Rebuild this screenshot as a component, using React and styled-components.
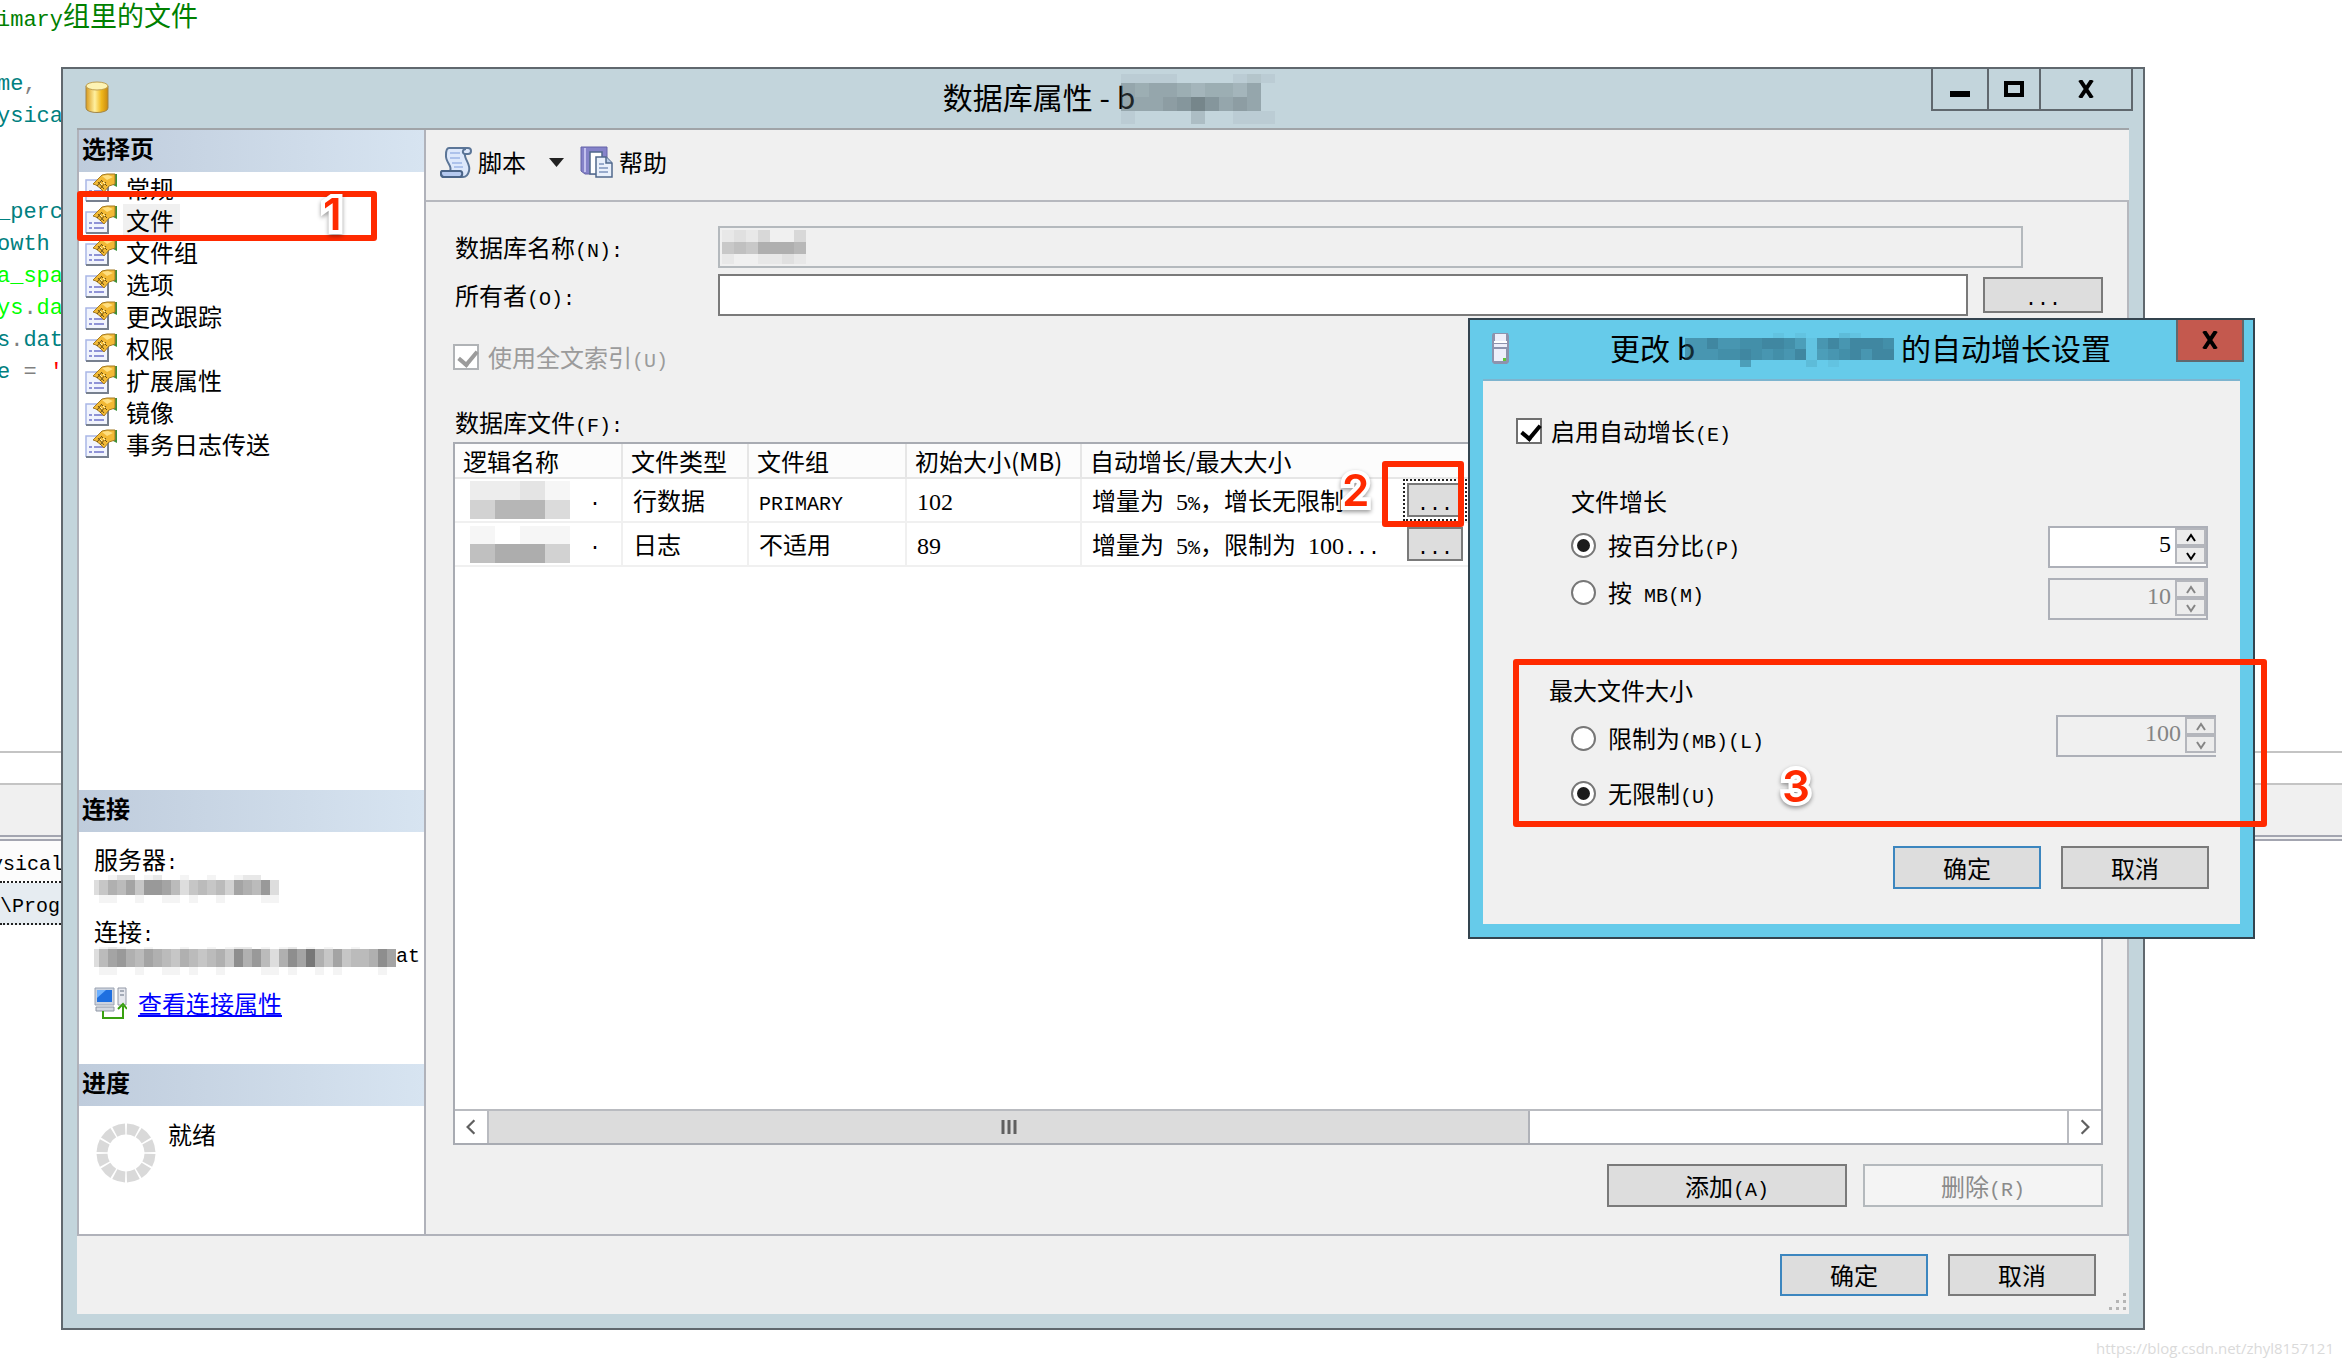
import React from "react";
import styled, { createGlobalStyle } from "styled-components";

const GlobalStyle = createGlobalStyle`
  * {
    box-sizing: border-box;
  }
  body {
    margin: 0;
    background: #fff;
    color: #000;
    font-family: "Noto Sans CJK SC", sans-serif;
    font-size: 24px;
    line-height: 32px;
  }
  button, input {
    font: inherit;
    color: inherit;
    border-radius: 0;
    margin: 0;
    padding: 0;
  }
  button {
    cursor: pointer;
  }
`;

/* ---------- text ---------- */

const Latin = styled.span`
  font-family: "Liberation Mono", monospace;
  font-size: 20px;
  line-height: 1;
`;

const Digits = styled.span`
  font-family: "Liberation Serif", serif;
  line-height: 1;
`;

// half-width characters take half of a CJK character, as on a Windows dialog
function Mixed({ children }) {
  return children
    .split(/([0-9]+|[\x20-\x2f\x3a-\x7e]+)/)
    .filter(Boolean)
    .map((part, i) => {
      if (/^[0-9]/.test(part)) return <Digits key={i}>{part}</Digits>;
      if (/^[\x20-\x7e]/.test(part)) return <Latin key={i}>{part}</Latin>;
      return part;
    });
}

/* ---------- mosaic over private names ---------- */

const MosaicSvg = styled.svg`
  display: block;
  flex: none;
  margin-left: ${(props) => props.$overlap || 0}px;
`;

// every hex digit is the strength of one cell
function Mosaic({ rows, cell, ink, overlap }) {
  const width = Math.max(...rows.map((r) => r[1].length)) * cell;
  const height = rows.reduce((sum, r) => sum + r[0], 0);
  let y = 0;
  return (
    <MosaicSvg
      width={width}
      height={height}
      shapeRendering="crispEdges"
      aria-hidden="true"
      $overlap={overlap}
    >
      {rows.map(([h, digits], r) => {
        const top = y;
        y += h;
        return digits
          .split("")
          .map((d, i) => (
            <rect
              key={r + "-" + i}
              x={i * cell}
              y={top}
              width={cell}
              height={h}
              fill={ink}
              opacity={parseInt(d, 16) / 15}
            />
          ));
      })}
    </MosaicSvg>
  );
}

/* ---------- icons ---------- */

const Icon = styled.svg`
  display: block;
  flex: none;
`;

function DatabaseIcon() {
  return (
    <Icon width="24" height="32" viewBox="0 0 24 32" aria-hidden="true">
      <defs>
        <linearGradient id="gold">
          <stop offset="0" stopColor="#d99a1c" />
          <stop offset="0.4" stopColor="#fff0a0" />
          <stop offset="0.7" stopColor="#f0b81c" />
          <stop offset="1" stopColor="#c98a10" />
        </linearGradient>
      </defs>
      <path
        d="M1 5v22c0 6 22 6 22 0V5z"
        fill="url(#gold)"
        stroke="#a0854a"
        strokeWidth="1"
      />
      <ellipse cx="12" cy="5" rx="11" ry="4" fill="#fdf3b4" stroke="#c0a050" />
    </Icon>
  );
}

function PageIcon() {
  return (
    <Icon width="32" height="30" viewBox="0 0 32 30" aria-hidden="true">
      <path d="M1 7h22v21H1z" fill="#f1f4fd" />
      <path d="M1 28V7h22" fill="none" stroke="#a9b6e6" strokeWidth="1.5" />
      <path d="M23 10v18H1" fill="none" stroke="#77808f" strokeWidth="2" />
      <path
        d="M4 18h3M4 23h3M9 18h10M9 23h10"
        stroke="#8f93d6"
        strokeWidth="2"
      />
      <path d="M28 1h4v13l-4-2z" fill="#3c8f3a" />
      <path
        d="M8 11L17 2l5-1h8v10l-6 2-5 6-4-4-4-3z"
        fill="#f2b935"
        stroke="#a37a22"
        strokeWidth="1"
      />
      <path d="M17 3l6-1 5 2-6 3z" fill="#ffdf80" />
      <path
        d="M13 9l6 7M16 7l6 6M12 13l5-6M15 16l6-7"
        stroke="#6b5012"
        strokeWidth="1"
      />
      <path d="M15 10l2 2M18 9l2 2" stroke="#fff3b0" strokeWidth="1" />
    </Icon>
  );
}

function ScriptIcon() {
  return (
    <Icon width="32" height="32" viewBox="0 0 32 32" aria-hidden="true">
      <path
        d="M9 2h19c4 0 4 6 0 6h-3c-1 5 6 10 4 17-1 4-3 6-6 6H4c-4 0-4-6 0-6h6c3-5-5-9-4-16 0-4 1-7 3-7z"
        fill="#dde8fb"
        stroke="#5b7597"
        strokeWidth="2"
      />
      <path
        d="M2 25h18c3 0 3 5 0 6H4c-3 0-4-5-2-6z"
        fill="#b5c9ef"
        stroke="#4a6488"
        strokeWidth="2"
      />
      <path d="M25 8c-3 0-3-5 1-5" fill="none" stroke="#5b7597" strokeWidth="2" />
      <path
        d="M10 7h10M10 12h10M12 17h10M14 21h9"
        stroke="#9db5e6"
        strokeWidth="1.5"
      />
    </Icon>
  );
}

function HelpIcon() {
  return (
    <Icon width="33" height="32" viewBox="0 0 33 32" aria-hidden="true">
      <path d="M1 1h26v27H5l-4-3z" fill="#8583c9" stroke="#6462a8" />
      <path d="M5 2v24" stroke="#c3c1ee" strokeWidth="2" />
      <path d="M10 6h12v22H10z" fill="#fff" stroke="#50688c" strokeWidth="1.5" />
      <path
        d="M16 11h10l6 6v14H16z"
        fill="#e9f0fb"
        stroke="#50688c"
        strokeWidth="1.5"
      />
      <path d="M26 11v6h6" fill="#b9cbe6" stroke="#50688c" strokeWidth="1.5" />
      <path d="M19 18h5M19 22h9M19 26h9" stroke="#7d94bd" strokeWidth="1.5" />
    </Icon>
  );
}

function ServerIcon() {
  return (
    <Icon width="20" height="32" viewBox="0 0 20 32" aria-hidden="true">
      <path d="M2 1h15l1 3v26l-2 2H3l-2-2V3z" fill="#8d93ad" />
      <path d="M4 2h11v7H4zM3 12h13v3H3zM3 17h12v12H3z" fill="#eeeffa" />
      <path d="M3 10h13" stroke="#fff" strokeWidth="2" />
      <path d="M12 26h3v3h-3z" fill="#5fc736" />
    </Icon>
  );
}

function LinkIcon() {
  return (
    <Icon width="33" height="32" viewBox="0 0 33 32" aria-hidden="true">
      <path d="M1 1h19v17H1z" fill="#cdd3de" stroke="#9aa3b2" />
      <path d="M3 3h15v12H3z" fill="#1f6fe0" />
      <path d="M3 3h9L3 11z" fill="#6cb0ff" />
      <path d="M2 20h18v4H2z" fill="#d5d9e0" stroke="#8e96a5" />
      <path d="M24 1h8v17h-8z" fill="#e6e8ee" stroke="#9298a6" />
      <path d="M26 4h4M26 8h4" stroke="#8e96a5" strokeWidth="1.5" />
      <path
        d="M9 24v7h20V19M24 22l5-5 4 5"
        fill="none"
        stroke="#39a010"
        strokeWidth="2"
      />
    </Icon>
  );
}

function Spinner() {
  return (
    <Icon width="60" height="60" viewBox="0 0 60 60" aria-hidden="true">
      <circle
        cx="30"
        cy="30"
        r="24"
        fill="none"
        stroke="#d9d9d9"
        strokeWidth="11"
        pathLength="120"
        strokeDasharray="8.6 1.4"
        strokeDashoffset="-0.7"
      />
    </Icon>
  );
}

function Chevron({ dir, size = 16 }) {
  const d = {
    up: "M4 11l4-6 4 6",
    down: "M4 5l4 6 4-6",
    left: "M11 2L5 8l6 6",
    right: "M5 2l6 6-6 6",
  }[dir];
  return (
    <Icon width={size} height={size} viewBox="0 0 16 16" aria-hidden="true">
      <path d={d} fill="none" stroke="currentColor" strokeWidth="2" />
    </Icon>
  );
}

function CloseGlyph() {
  return (
    <svg width="18" height="18" viewBox="0 0 18 18" aria-hidden="true">
      <path d="M3 0l12 18M15 0L3 18" stroke="#000" strokeWidth="4" />
    </svg>
  );
}

/* ---------- editor behind the windows ---------- */

const Desktop = styled.div`
  position: relative;
  display: flex;
  flex-direction: column;
  min-height: 100vh;
  overflow: hidden;
`;

const Code = styled.pre`
  flex: 1;
  margin: 0 0 0 -3px;
  padding-top: 5px;
  font-family: "Liberation Mono", "Noto Sans CJK SC", monospace;
  font-size: 22px;
  line-height: 32px;
  color: #008080;
`;

const Token = styled.span`
  color: ${(props) => props.$color};
`;

const Comment = styled.span`
  color: #008000;
  font-size: 27px;
  line-height: 1;
`;

const Results = styled.div`
  height: 615px;
  border-top: 2px solid #c4c4c4;
  padding-top: 30px;
`;

const TabStrip = styled.div`
  height: 58px;
  background: #f0f0f0;
  border-top: 2px solid #c4c4c4;
  border-bottom: 6px double #a3a5b0;
`;

const ResultLine = styled.div`
  width: 61px;
  height: 42px;
  line-height: 38px;
  text-indent: ${(props) => props.$shift || 0}px;
  white-space: pre;
  overflow: hidden;
  background: ${(props) => (props.$picked ? "#e6ecf1" : "#fcfcfc")};
  border-bottom: 2px dotted #222;
`;

/* ---------- window parts ---------- */

const Window = styled.section`
  position: absolute;
  top: 67px;
  left: 61px;
  right: 197px;
  bottom: 36px;
  display: flex;
  flex-direction: column;
  padding: 0 14px 14px;
  border: 2px solid #60686e;
  background: #c3d5dc;
`;

const TitleBar = styled.header`
  display: flex;
  align-items: center;
  height: 59px;
  flex: none;
`;

const IconSlot = styled.span`
  display: block;
  padding: 0 10px 4px 8px;
`;

const Title = styled.h1`
  flex: 1;
  display: flex;
  align-items: center;
  justify-content: center;
  margin: 0;
  padding-left: ${(props) => props.$shift}px;
  font-size: 30px;
  line-height: 40px;
  font-weight: 400;
  white-space: pre;
`;

const TitleText = styled.span`
  padding-bottom: 6px;
`;

const TitleButtons = styled.div`
  display: flex;
  align-self: flex-start;
  margin-right: -4px;
  border: 2px solid #60686e;
  border-top: 0;
`;

const TitleButton = styled.button`
  display: flex;
  align-items: center;
  justify-content: center;
  width: ${(props) => props.$width}px;
  height: 40px;
  border: 0;
  border-left: ${(props) => (props.$first ? 0 : "2px solid #60686e")};
  background: ${(props) => props.$bg || "transparent"};
`;

const Client = styled.div`
  flex: 1;
  display: flex;
  flex-direction: column;
  border-top: 2px solid #a0a4a8;
  background: #f0f0f0;
`;

const Columns = styled.div`
  flex: 1;
  display: flex;
  border-bottom: 2px solid #b0b2ba;
`;

/* ---------- left pane ---------- */

const Sidebar = styled.aside`
  position: relative;
  display: flex;
  flex-direction: column;
  width: 349px;
  border-left: 2px solid #b0b2ba;
  border-right: 2px solid #b0b2ba;
  background: #fff;
`;

const PaneTitle = styled.h2`
  margin: 0;
  padding: 0 0 6px 3px;
  font-size: 24px;
  line-height: 36px;
  font-weight: 700;
  background: linear-gradient(to right, #bfccdc, #d7e4f1);
`;

const PageList = styled.ul`
  flex: 1;
  margin: 0;
  padding: 0 0 0 6px;
  list-style: none;
`;

const PageButton = styled.button`
  display: flex;
  align-items: center;
  gap: 6px;
  height: 32px;
  border: 0;
  background: none;
`;

const PageLabel = styled.span`
  padding: 0 6px 0 3px;
  background: ${(props) => (props.$current ? "#f0f0f0" : "transparent")};
`;

const Connection = styled.div`
  height: 232px;
  padding: 11px 0 0 15px;
`;

const Hidden = styled.div`
  display: flex;
  height: 40px;
  overflow: hidden;
`;

const LinkRow = styled.div`
  display: flex;
  align-items: center;
  gap: 11px;
`;

const Anchor = styled.a`
  color: #0000ff;
  text-decoration: underline;
`;

const Progress = styled.div`
  display: flex;
  gap: 12px;
  height: 128px;
  padding: 12px 0 0 17px;
`;

const SpinnerBox = styled.div`
  padding-top: 5px;
`;

/* ---------- right pane ---------- */

const Main = styled.main`
  flex: 1;
  display: flex;
  flex-direction: column;
  min-width: 0;
`;

const Toolbar = styled.div`
  display: flex;
  align-items: flex-start;
  height: 72px;
  padding: 16px 14px;
  border-bottom: 2px solid #b6b8be;
`;

const ToolButton = styled.button`
  display: flex;
  align-items: center;
  gap: 6px;
  border: 0;
  background: none;
`;

const Arrow = styled.button`
  display: flex;
  align-items: center;
  height: 32px;
  padding: 0 16px 0 23px;
  border: 0;
  background: none;
`;

const Form = styled.form`
  flex: 1;
  display: flex;
  flex-direction: column;
  padding: 24px 24px 27px 27px;
  border-right: 2px solid #b6b8be;
`;

const Field = styled.div`
  display: flex;
  align-items: center;
  margin: 0 ${(props) => props.$end || 0}px 6px 0;
`;

const FieldLabel = styled.label`
  width: 265px;
  padding-left: 2px;
`;

const InputWrap = styled.div`
  position: relative;
  flex: 1;
`;

const TextInput = styled.input`
  display: block;
  width: 100%;
  height: 42px;
  padding: 0 8px;
  border: 2px solid #7a7a7a;
  background: #fff;
  &:disabled {
    border-color: #b4b9bd;
    background: #f0f0f0;
  }
`;

const InputMask = styled.div`
  position: absolute;
  left: 4px;
  top: 4px;
`;

const Button = styled.button`
  width: ${(props) => props.$width || 148}px;
  height: ${(props) => props.$height || 43}px;
  margin-left: ${(props) => props.$gap || 0}px;
  border: 2px solid ${(props) => (props.$primary ? "#3c86bf" : "#7a7a7a")};
  background: #dddddd;
  &:disabled {
    color: #8b8b8b;
    border-color: #b4b9bd;
    background: #f4f4f4;
  }
`;

const Check = styled.label`
  display: flex;
  align-items: center;
  gap: ${(props) => props.$gap || 9}px;
  height: 32px;
  color: ${(props) => (props.$off ? "#9b9b9b" : "#000")};
`;

const Tick = styled.input`
  appearance: none;
  position: relative;
  width: 26px;
  height: 26px;
  border: 2px solid #6f6f6f;
  background: #fff;
  &:disabled {
    border-color: #b0b3b6;
  }
  &:checked::after {
    content: "";
    position: absolute;
    left: 7px;
    top: 1px;
    width: 8px;
    height: 15px;
    border: solid currentColor;
    border-width: 0 4px 4px 0;
    transform: rotate(40deg);
  }
`;

const Radio = styled.input`
  appearance: none;
  display: grid;
  place-items: center;
  width: 25px;
  height: 25px;
  border: 2px solid #777;
  background: #fff;
  && {
    border-radius: 50%;
  }
  &:checked::after {
    content: "";
    width: 13px;
    height: 13px;
    border-radius: 50%;
    background: #1c1c1c;
  }
`;

const FullText = styled.div`
  margin: 19px 0 33px;
`;

const TableLabel = styled.div`
  padding-left: 2px;
  margin-bottom: 4px;
`;

const TableFrame = styled.div`
  flex: 1;
  display: flex;
  flex-direction: column;
  border: 2px solid #a8abb2;
  background: #fff;
`;

const FileTable = styled.table`
  width: 1036px;
  table-layout: fixed;
  border-collapse: separate;
  border-spacing: 0;
  white-space: nowrap;
`;

const Th = styled.th`
  width: ${(props) => props.$width}px;
  height: 35px;
  padding: 0 0 0 8px;
  line-height: 32px;
  text-align: left;
  font-weight: 400;
  background: #fcfcfc;
  border-right: ${(props) => (props.$open ? 0 : "2px solid #e6e6e6")};
  border-bottom: 2px solid #e6e6e6;
`;

const Td = styled.td`
  position: relative;
  height: 43px;
  padding: 0 0 0 ${(props) => (props.$flush ? 0 : 10)}px;
  border-right: ${(props) => (props.$open ? 0 : "2px solid #f0f0f0")};
  border-bottom: 2px solid #f0f0f0;
`;

const NameCell = styled.div`
  display: flex;
  align-items: center;
  justify-content: space-between;
  padding: 0 20px 0 5px;
`;

const Focus = styled.div`
  width: 64px;
  padding: 2px;
  border: 2px dotted ${(props) => (props.$on ? "#222" : "transparent")};
`;

const DotsButton = styled.button`
  display: block;
  width: 56px;
  height: 34px;
  line-height: 30px;
  border: 2px solid #7a7a7a;
  background: #dddddd;
`;

const ScrollBar = styled.div`
  display: flex;
  height: 34px;
  margin-top: auto;
  border-top: 2px solid #b9bbc0;
`;

const ScrollButton = styled.button`
  display: grid;
  place-items: center;
  width: 34px;
  border: 0;
  border-${(props) => props.$side}: 2px solid #b9bbc0;
  background: #fff;
  color: #606060;
`;

const Track = styled.div`
  flex: 1;
  display: flex;
`;

const Thumb = styled.div`
  display: grid;
  place-items: center;
  width: 66%;
  background: #dcdcdc;
  border-right: 2px solid #b0b2b8;
`;

const Actions = styled.div`
  display: flex;
  justify-content: flex-end;
  margin-top: ${(props) => props.$top || 0}px;
`;

const Footer = styled.footer`
  display: flex;
  justify-content: flex-end;
  align-items: flex-start;
  height: 78px;
  padding: 18px 2px 0 0;
`;

const Grip = styled.svg`
  align-self: flex-end;
  margin: 0 0 3px 13px;
`;

/* ---------- growth dialog ---------- */

const Dialog = styled(Window)`
  top: 318px;
  left: auto;
  right: 87px;
  bottom: auto;
  width: 787px;
  height: 621px;
  padding: 0 13px 13px;
  border-color: #33444f;
  background: #66cbea;
`;

const Settings = styled.form`
  flex: 1;
  padding: 34px 31px 0 33px;
  background: #f0f0f0;
  border-top: 2px solid #7db4cf;
`;

const Group = styled.fieldset`
  position: relative;
  margin: ${(props) => props.$top}px 0 0;
  padding: 0;
  border: 0;
`;

const Legend = styled.legend`
  padding: 0 0 0 ${(props) => props.$indent}px;
`;

const Split = styled.div`
  display: flex;
  justify-content: space-between;
  align-items: flex-start;
  padding: 9px 1px 0 55px;
`;

const Stack = styled.div`
  display: flex;
  flex-direction: column;
  gap: ${(props) => props.$gap}px;
  padding-top: ${(props) => props.$top || 0}px;
`;

const SpinBox = styled.div`
  display: flex;
  width: 160px;
  height: 42px;
  margin-right: ${(props) => (props.$cut ? -8 : 0)}px;
  border: 2px solid #adb0b8;
  border-right-width: ${(props) => (props.$cut ? 0 : 2)}px;
  background: ${(props) => (props.$off ? "#f0f0f0" : "#fff")};
  color: ${(props) => (props.$off ? "#858585" : "#000")};
`;

const SpinInput = styled.input`
  flex: 1;
  min-width: 0;
  height: 32px;
  padding-right: 4px;
  border: 0;
  background: none;
  text-align: right;
  font-family: "Liberation Serif", serif;
`;

const SpinButtons = styled.div`
  width: 31px;
  height: 36px;
  display: grid;
`;

const SpinButton = styled.button`
  display: grid;
  place-items: center;
  height: 18px;
  border: 2px solid #b4b6bc;
  background: #ececec;
`;

/* ---------- red marks ---------- */

const MarkBox = styled.div`
  position: absolute;
  left: ${(props) => props.$x}px;
  top: ${(props) => props.$y}px;
  width: ${(props) => props.$w}px;
  height: ${(props) => props.$h}px;
  border: 6px solid #ff2a00;
  border-radius: 3px;
  pointer-events: none;
  z-index: 2;
`;

const MarkNumber = styled.span`
  position: absolute;
  left: ${(props) => props.$x}px;
  top: ${(props) => props.$y}px;
  font-family: Inter, sans-serif;
  font-size: 44px;
  line-height: 44px;
  font-weight: 600;
  color: #ff2a00;
  -webkit-text-stroke: 8px #fff;
  paint-order: stroke fill;
  filter: drop-shadow(0 2px 2px rgba(0, 0, 0, 0.4));
`;

const Watermark = styled.div`
  position: absolute;
  right: 8px;
  bottom: 6px;
  font-family: "Open Sans", sans-serif;
  font-size: 15px;
  line-height: 24px;
  color: #dadada;
`;

const pages = [
  "常规",
  "文件",
  "文件组",
  "选项",
  "更改跟踪",
  "权限",
  "扩展属性",
  "镜像",
  "事务日志传送",
];

const files = [
  {
    type: "行数据",
    group: "PRIMARY",
    size: "102",
    growth: "增量为 5%，增长无限制",
    mask: [
      [19, "2231"],
      [19, "5884"],
    ],
  },
  {
    type: "日志",
    group: "不适用",
    size: "89",
    growth: "增量为 5%，限制为 100...",
    mask: [
      [18, "1011"],
      [19, "7995"],
    ],
  },
];

function Spin({ value, label, off, cut }) {
  return (
    <SpinBox $off={off} $cut={cut}>
      <SpinInput defaultValue={value} aria-label={label} disabled={off} />
      <SpinButtons>
        <SpinButton type="button" aria-label="增加" disabled={off}>
          <Chevron dir="up" size={16} />
        </SpinButton>
        <SpinButton type="button" aria-label="减少" disabled={off}>
          <Chevron dir="down" size={16} />
        </SpinButton>
      </SpinButtons>
    </SpinBox>
  );
}

function Editor() {
  return (
    <>
      <Code>
        <Token $color="#008000">imary</Token>
        <Comment>组里的文件</Comment>
        {"\n\nme"}
        <Token $color="#808080">,</Token>
        {"\nysica\n\n\n_perc\nowth\n"}
        <Token $color="#00ff00">{"a_spa\nys"}</Token>
        <Token $color="#808080">.</Token>
        <Token $color="#00ff00">da</Token>
        {"\ns"}
        <Token $color="#808080">.</Token>
        {"dat\ne "}
        <Token $color="#808080">=</Token>
        <Token $color="#ff0000">{" '"}</Token>
      </Code>
      <Results>
        <TabStrip />
        <ResultLine $shift={-9}>
          <Latin>ysical</Latin>
        </ResultLine>
        <ResultLine $picked>
          <Latin>\Prog</Latin>
        </ResultLine>
      </Results>
    </>
  );
}

function LeftPane() {
  return (
    <Sidebar>
      <PaneTitle>选择页</PaneTitle>
      <PageList>
        {pages.map((page) => (
          <li key={page}>
            <PageButton>
              <PageIcon />
              <PageLabel $current={page === "文件"}>{page}</PageLabel>
            </PageButton>
          </li>
        ))}
      </PageList>
      <PaneTitle>连接</PaneTitle>
      <Connection>
        <div>
          <Mixed>服务器:</Mixed>
        </div>
        <Hidden>
          <Mosaic
            cell={9}
            ink="#555"
            overlap={-4}
            rows={[
              [5, "001330120010010012200"],
              [15, "357685998635656487693"],
              [8, "011001001101001000011"],
            ]}
          />
        </Hidden>
        <div>
          <Mixed>连接:</Mixed>
        </div>
        <Hidden>
          <Mosaic
            cell={9}
            ink="#555"
            overlap={-4}
            rows={[
              [2, "0121001000100101220101201010010000"],
              [18, "3689768765765675a79637a8c7585667a8"],
              [8, "0110010011010010000110100101000010"],
            ]}
          />
          <Latin>at</Latin>
        </Hidden>
        <LinkRow>
          <LinkIcon />
          <Anchor href="#connection">查看连接属性</Anchor>
        </LinkRow>
      </Connection>
      <PaneTitle>进度</PaneTitle>
      <Progress>
        <SpinnerBox>
          <Spinner />
        </SpinnerBox>
        <span>就绪</span>
      </Progress>
      <MarkBox $x={-2} $y={61} $w={300} $h={50}>
        <MarkNumber $x={240} $y={-5}>
          1
        </MarkNumber>
      </MarkBox>
    </Sidebar>
  );
}

function FilesPage() {
  return (
    <Form>
      <Field $end={80}>
        <FieldLabel htmlFor="db-name">
          <Mixed>数据库名称(N):</Mixed>
        </FieldLabel>
        <InputWrap>
          <TextInput id="db-name" disabled />
          <InputMask>
            <Mosaic
              cell={12}
              ink="#777"
              rows={[
                [12, "12130030"],
                [12, "56588870"],
                [10, "10011210"],
              ]}
            />
          </InputMask>
        </InputWrap>
      </Field>
      <Field>
        <FieldLabel htmlFor="db-owner">
          <Mixed>所有者(O):</Mixed>
        </FieldLabel>
        <InputWrap>
          <TextInput id="db-owner" />
        </InputWrap>
        <Button type="button" $width={120} $height={36} $gap={15}>
          <Latin>...</Latin>
        </Button>
      </Field>
      <FullText>
        <Check $off>
          <Tick type="checkbox" defaultChecked disabled />
          <span>
            <Mixed>使用全文索引(U)</Mixed>
          </span>
        </Check>
      </FullText>
      <TableLabel>
        <Mixed>数据库文件(F):</Mixed>
      </TableLabel>
      <TableFrame>
        <FileTable>
          <thead>
            <tr>
              <Th $width={168}>逻辑名称</Th>
              <Th $width={126}>文件类型</Th>
              <Th $width={158}>文件组</Th>
              <Th $width={175}>初始大小(MB)</Th>
              <Th $width={321} $open>
                自动增长/最大大小
              </Th>
              <Th $width={88} $open />
            </tr>
          </thead>
          <tbody>
            {files.map((file, i) => (
              <tr key={file.type}>
                <Td>
                  <NameCell>
                    <Mosaic cell={25} ink="#777" rows={file.mask} />
                    <Latin>.</Latin>
                  </NameCell>
                </Td>
                <Td>{file.type}</Td>
                <Td>
                  <Mixed>{file.group}</Mixed>
                </Td>
                <Td>
                  <Mixed>{file.size}</Mixed>
                </Td>
                <Td $open>
                  <Mixed>{file.growth}</Mixed>
                </Td>
                <Td $flush>
                  <Focus $on={i === 0}>
                    <DotsButton type="button">
                      <Latin>...</Latin>
                    </DotsButton>
                  </Focus>
                  {i === 0 && (
                    <MarkBox $x={-21} $y={-18} $w={82} $h={66}>
                      <MarkNumber $x={-46} $y={1}>
                        2
                      </MarkNumber>
                    </MarkBox>
                  )}
                </Td>
              </tr>
            ))}
          </tbody>
        </FileTable>
        <ScrollBar>
          <ScrollButton type="button" $side="right" aria-label="向左">
            <Chevron dir="left" size={18} />
          </ScrollButton>
          <Track>
            <Thumb>
              <svg width="16" height="14" aria-hidden="true">
                <path d="M2 0v14M8 0v14M14 0v14" stroke="#606060" strokeWidth="3" />
              </svg>
            </Thumb>
          </Track>
          <ScrollButton type="button" $side="left" aria-label="向右">
            <Chevron dir="right" size={18} />
          </ScrollButton>
        </ScrollBar>
      </TableFrame>
      <Actions $top={19}>
        <Button type="button" $width={240}>
          <Mixed>添加(A)</Mixed>
        </Button>
        <Button type="button" $width={240} $gap={16} disabled>
          <Mixed>删除(R)</Mixed>
        </Button>
      </Actions>
    </Form>
  );
}

function PropertiesWindow() {
  return (
    <Window>
      <TitleBar>
        <IconSlot>
          <DatabaseIcon />
        </IconSlot>
        <Title $shift={168}>
          <TitleText>数据库属性 - b</TitleText>
          <Mosaic
            cell={14}
            ink="#4f5f63"
            overlap={-14}
            rows={[
              [9, "11110000121"],
              [14, "65665455460"],
              [14, "66678a86760"],
              [13, "10000300111"],
            ]}
          />
        </Title>
        <TitleButtons>
          <TitleButton $width={54} $first aria-label="最小化">
            <svg width="20" height="18" aria-hidden="true">
              <path d="M0 11h20v6H0z" />
            </svg>
          </TitleButton>
          <TitleButton $width={52} aria-label="最大化">
            <svg width="20" height="16" aria-hidden="true">
              <path d="M2 2h16v12H2z" fill="none" stroke="#000" strokeWidth="4" />
            </svg>
          </TitleButton>
          <TitleButton $width={92} aria-label="关闭">
            <CloseGlyph />
          </TitleButton>
        </TitleButtons>
      </TitleBar>
      <Client>
        <Columns>
          <LeftPane />
          <Main>
            <Toolbar>
              <ToolButton>
                <ScriptIcon />
                脚本
              </ToolButton>
              <Arrow aria-label="脚本选项">
                <svg width="15" height="9" aria-hidden="true">
                  <path d="M0 0h15L7.5 9z" fill="#222" />
                </svg>
              </Arrow>
              <ToolButton>
                <HelpIcon />
                帮助
              </ToolButton>
            </Toolbar>
            <FilesPage />
          </Main>
        </Columns>
        <Footer>
          <Button $primary $height={42}>
            确定
          </Button>
          <Button $height={42} $gap={20}>
            取消
          </Button>
          <Grip width="18" height="18" aria-hidden="true">
            <path
              d="M14 0h3v3h-3zM14 7h3v3h-3zM14 14h3v3h-3zM7 7h3v3H7zM7 14h3v3H7zM0 14h3v3H0z"
              fill="#b5b5b5"
            />
          </Grip>
        </Footer>
      </Client>
    </Window>
  );
}

function GrowthDialog() {
  return (
    <Dialog as="div" role="dialog" aria-label="自动增长设置">
      <TitleBar>
        <IconSlot>
          <ServerIcon />
        </IconSlot>
        <Title $shift={24}>
          <TitleText>更改 b</TitleText>
          <Mosaic
            cell={11}
            ink="#265a70"
            overlap={-10}
            rows={[
              [5, "0000000010100021000"],
              [11, "7797788998617979998"],
              [11, "7778898787916789799"],
              [7, "0000060000020100000"],
            ]}
          />
          <TitleText>{" 的自动增长设置"}</TitleText>
        </Title>
        <TitleButtons>
          <TitleButton $width={64} $first $bg="#c4594e" aria-label="关闭">
            <CloseGlyph />
          </TitleButton>
        </TitleButtons>
      </TitleBar>
      <Settings>
        <Check>
          <Tick type="checkbox" defaultChecked />
          <span>
            <Mixed>启用自动增长(E)</Mixed>
          </span>
        </Check>
        <Group $top={38}>
          <Legend $indent={55}>文件增长</Legend>
          <Split>
            <Stack $gap={15} $top={3}>
              <Check $gap={12}>
                <Radio type="radio" name="growth" defaultChecked />
                <span>
                  <Mixed>按百分比(P)</Mixed>
                </span>
              </Check>
              <Check $gap={12}>
                <Radio type="radio" name="growth" />
                <span>
                  <Mixed>按 MB(M)</Mixed>
                </span>
              </Check>
            </Stack>
            <Stack $gap={10}>
              <Spin value="5" label="百分比" />
              <Spin value="10" label="MB" off />
            </Stack>
          </Split>
        </Group>
        <Group $top={54}>
          <Legend $indent={33}>最大文件大小</Legend>
          <Split>
            <Stack $gap={23} $top={7}>
              <Check $gap={12}>
                <Radio type="radio" name="limit" />
                <span>
                  <Mixed>限制为(MB)(L)</Mixed>
                </span>
              </Check>
              <Check $gap={12}>
                <Radio type="radio" name="limit" defaultChecked />
                <span>
                  <Mixed>无限制(U)</Mixed>
                </span>
              </Check>
            </Stack>
            <Spin value="100" label="限制大小" off cut />
          </Split>
          <MarkBox $x={-3} $y={-47} $w={754} $h={168}>
            <MarkNumber $x={263} $y={99}>
              3
            </MarkNumber>
          </MarkBox>
        </Group>
        <Actions $top={37}>
          <Button type="button" $primary>
            确定
          </Button>
          <Button type="button" $gap={20}>
            取消
          </Button>
        </Actions>
      </Settings>
    </Dialog>
  );
}

function App() {
  return (
    <>
      <GlobalStyle />
      <Desktop>
        <Editor />
        <PropertiesWindow />
        <GrowthDialog />
        <Watermark>https://blog.csdn.net/zhyl8157121</Watermark>
      </Desktop>
    </>
  );
}

export default App;
